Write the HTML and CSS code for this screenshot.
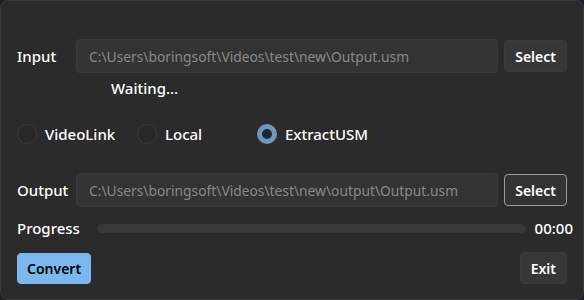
FILE: index.html
```html
<!DOCTYPE html>
<html>
<head>
<meta charset="utf-8">
<link rel="stylesheet" href="styles.css">
</head>
<body>
<div class="window">
  <div class="row path-row first">
    <span class="label">Input</span>
    <div class="textbox">C:\Users\boringsoft\Videos\test\new\Output.usm</div>
    <button class="btn">Select</button>
  </div>
  <div class="status">Waiting...</div>
  <div class="radios">
    <label class="radio"><span class="dot"></span>VideoLink</label>
    <label class="radio"><span class="dot"></span>Local</label>
    <label class="radio checked"><span class="dot"></span>ExtractUSM</label>
  </div>
  <div class="row path-row second">
    <span class="label">Output</span>
    <div class="textbox">C:\Users\boringsoft\Videos\test\new\output\Output.usm</div>
    <button class="btn focused">Select</button>
  </div>
  <div class="row progress-row">
    <span class="label">Progress</span>
    <div class="bar"></div>
    <span class="time">00:00</span>
  </div>
  <div class="row actions">
    <button class="btn primary">Convert</button>
    <button class="btn">Exit</button>
  </div>
</div>
</body>
</html>
```
FILE: styles.css
```css
* { box-sizing: border-box; }
html, body { margin: 0; padding: 0; }
body {
  width: 584px;
  height: 300px;
  background: #1b1d24;
  font-family: "Noto Sans", "Segoe UI", sans-serif;
  color: #ffffff;
  overflow: hidden;
}
.window {
  width: 584px;
  height: 300px;
  background: #2b2b2b;
  border: 1px solid #3a3a3a;
  border-radius: 8px;
  padding: 38px 16px 0 16px;
  display: flex;
  flex-direction: column;
}
.row {
  display: flex;
  align-items: center;
}
.label {
  font-size: 15px;
  font-weight: 500;
}
.path-row .label { width: 59px; flex: none; }
.textbox {
  flex: 1;
  height: 34px;
  background: #333333;
  border: 1px solid #3b3b3b;
  border-radius: 4px;
  padding-left: 12px;
  display: flex;
  align-items: center;
  font-size: 13.8px;
  color: #8a8a8a;
  white-space: nowrap;
  overflow: hidden;
}
.btn {
  font-family: inherit;
  font-size: 14px;
  font-weight: 600;
  color: #ffffff;
  background: #373737;
  border: 1px solid #3a3a3a;
  border-radius: 4px;
  height: 32px;
  padding: 0 10px;
  cursor: default;
}
.path-row .btn { margin-left: 6px; }
.btn.focused { border-color: #9a9a9a; background: #333333; }
.status {
  margin: 4px 0 0 94px;
  font-size: 15px;
  font-weight: 500;
  height: 22px;
  line-height: 22px;
}
.radios {
  display: flex;
  margin-top: 24px;
  height: 22px;
}
.radio {
  display: flex;
  align-items: center;
  width: 120px;
  font-size: 15px;
  font-weight: 500;
}
.dot {
  width: 20px;
  height: 20px;
  border-radius: 50%;
  border: 1px solid #3e3e3e;
  background: #282828;
  margin-right: 8px;
  flex: none;
}
.radio.checked .dot {
  background: #1e2833;
  border: 5px solid #6d97be;
}
.path-row.second { margin-top: 28px; }
.progress-row { margin-top: 11px; height: 20px; margin-right: -6px; }
.bar {
  flex: 1;
  height: 9px;
  margin-left: 17px;
  margin-right: 1px;
  background: #383838;
  border-radius: 5px;
}
.time {
  margin-left: 8px;
  font-size: 15px;
  font-weight: 500;
}
.actions {
  margin-top: 14px;
  justify-content: space-between;
}
.btn.primary {
  background: #7ab8ef;
  border-color: #7ab8ef;
  color: #000000;
  padding: 0 9px;
  height: 31px;
}
```
